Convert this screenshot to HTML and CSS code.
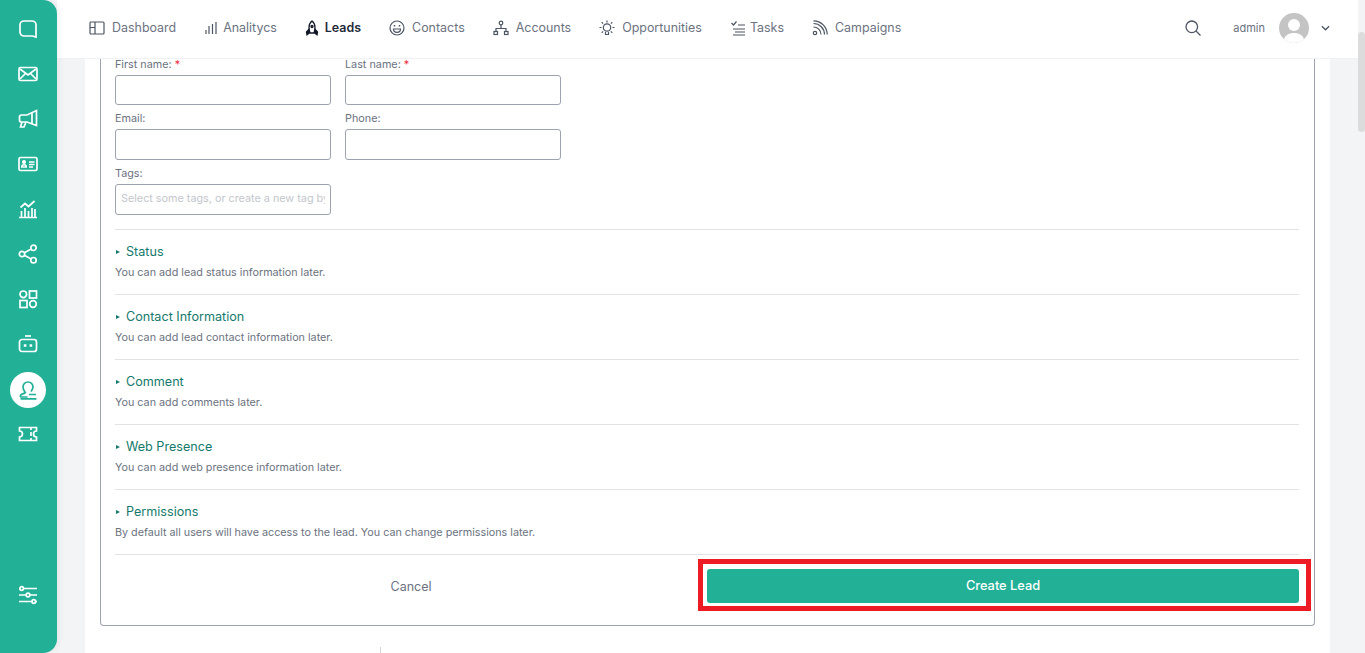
FILE: index.html
```html
<!DOCTYPE html>
<html lang="en">
<head>
    <meta charset="UTF-8">
    <meta name="viewport" content="width=device-width, initial-scale=1.0">
    <title>Create Lead</title>
    <link rel="stylesheet" href="styles.css">
</head>
<body>
<div class="app">
    <aside class="sidebar">
        <svg class="side-icon" viewBox="0 0 20 20"><path d="M6 2h8a4 4 0 0 1 4 4v12l-3.500-1H6a4 4 0 0 1-4-4V6a4 4 0 0 1 4-4z"/></svg>
        <svg class="side-icon" viewBox="0 0 20 20"><rect x="1" y="3.500" width="18" height="13" rx="1.500"/><path d="M2 5l8 6 8-6M2 15l5.500-5.500M18 15l-5.500-5.500"/></svg>
        <svg class="side-icon" viewBox="0 0 20 20"><path d="M18.500 1.500v15L9 13H3.500a2 2 0 0 1-2-2V8a2 2 0 0 1 2-2H9zM14 4v10.500M4 13l-1.500 5H6l2-5"/></svg>
        <svg class="side-icon" viewBox="0 0 20 20"><rect x="1" y="3.500" width="18" height="13" rx="1.500"/><circle cx="6" cy="8" r="1.200" fill="#fff"/><path d="M3.800 13c0-3 4.400-3 4.400 0zM11 8h5.500M11 10.500h5.500M11 13h4"/></svg>
        <svg class="side-icon" viewBox="0 0 20 20"><path d="M1 18.500h18M3.500 18v-6M7 18V9M10.500 18v-6M14 18V9M17 18v-8M2.500 8.500l4.500-4 3.500 3 6-5.500"/></svg>
        <svg class="side-icon" viewBox="0 0 20 20"><circle cx="4" cy="10" r="2.700"/><circle cx="15.500" cy="3.800" r="2.700"/><circle cx="15.500" cy="16.200" r="2.700"/><path d="M6.400 8.700l6.700-3.600M6.400 11.300l6.700 3.600"/></svg>
        <svg class="side-icon" viewBox="0 0 20 20"><circle cx="5.300" cy="5.300" r="3.300"/><rect x="11.500" y="2" width="7" height="7"/><rect x="2" y="11.500" width="7" height="7"/><circle cx="15" cy="15" r="3.300"/></svg>
        <svg class="side-icon" viewBox="0 0 20 20"><rect x="1.500" y="5.500" width="17" height="12" rx="2.500"/><path d="M7 2h6"/><path class="side-dots" d="M5.800 11.500h2.600M11.600 11.500h2.600"/></svg>
        <span class="side-active">
            <svg class="side-icon side-icon-active" viewBox="0 0 20 20"><path d="M7.500 13c0-1-2.500-2.500-2.500-6a5 5 0 0 1 10 0c0 2-1 3-2 4.500M7.500 13c-2 .5-4.500 1-5 2.500-.3 1 .2 1.500 1 1.500h6M11 14.500h7M2.500 18.800h16"/></svg>
        </span>
        <svg class="side-icon" viewBox="0 0 20 20"><path d="M1.500 3.500h17V7a3 3 0 0 0 0 6v3.500h-17V13a3 3 0 0 0 0-6zM13 4v2M13 8v4M13 14v2"/></svg>
        <svg class="side-icon side-settings" viewBox="0 0 20 20"><path d="M5.500 3.500H19M1 3.500h1M1 10h7M12 10h7M1 16.500h13M17.500 16.500H19"/><circle cx="3.700" cy="3.500" r="1.800"/><circle cx="10" cy="10" r="1.800"/><circle cx="15.800" cy="16.500" r="1.800"/></svg>
    </aside>

    <div class="main">
        <header class="topbar">
            <nav class="nav">
                <a class="nav-item"><svg class="nav-icon" viewBox="0 0 16 16"><rect x="1" y="2" width="14" height="12" rx="1"/><path d="M1 7.500h5M6 2v12"/></svg>Dashboard</a>
                <a class="nav-item"><svg class="nav-icon nav-icon-sm" viewBox="0 0 12 16"><path d="M1 14v-4M4 14V6M7.500 14V4M11 14V2"/></svg>Analitycs</a>
                <a class="nav-item active"><svg class="nav-icon nav-icon-md" viewBox="0 0 14 16"><path d="M7 1c2.300 1.700 3 4 3 6.500 0 2-.5 4-1 5.500H5c-.5-1.500-1-3.500-1-5.500C4 5 4.700 2.700 7 1z"/><path class="nav-fin" d="M3.800 9.500L1.500 12l.5 2.800 2.500-2zM10.200 9.500l2.300 2.500-.5 2.800-2.500-2z"/><circle cx="7" cy="6.500" r="1"/></svg>Leads</a>
                <a class="nav-item"><svg class="nav-icon" viewBox="0 0 16 16"><circle cx="8" cy="8" r="7"/><path d="M4.500 9h7c0 4.500-7 4.500-7 0z"/><path class="nav-eyes" d="M5.500 5v1.500M10.500 5v1.500"/></svg>Contacts</a>
                <a class="nav-item"><svg class="nav-icon" viewBox="0 0 16 16"><circle cx="8" cy="3" r="1.800"/><rect x="1" y="11.500" width="3.500" height="3"/><rect x="11.500" y="11.500" width="3.500" height="3"/><path d="M8 5v3.500M3 11V8.500h10V11"/></svg>Accounts</a>
                <a class="nav-item"><svg class="nav-icon" viewBox="0 0 16 16"><circle cx="8" cy="7.500" r="3.700"/><path d="M6.500 12v2.500h3V12M8 .5v2M.5 7.500h2M13.500 7.500h2M2.700 2.200l1.400 1.400M13.300 2.200l-1.400 1.400M2.700 12.800l1.400-1.400M13.300 12.800l-1.400-1.400"/></svg>Opportunities</a>
                <a class="nav-item nav-item-tight"><svg class="nav-icon" viewBox="0 0 16 16"><path d="M1.500 3l2 2 3-3.500M8 5h7M3 9h12M5 12h10M3 15h12"/></svg>Tasks</a>
                <a class="nav-item"><svg class="nav-icon" viewBox="0 0 16 16"><circle cx="3" cy="13" r="1.700"/><path d="M1.500 7a7.500 7.500 0 0 1 7.500 7.500M1.500 3.500a11 11 0 0 1 11 11M1.500.8a13.700 13.700 0 0 1 13.700 13.700"/></svg>Campaigns</a>
            </nav>
            <div class="user">
                <svg class="search" viewBox="0 0 16 16"><circle cx="6.800" cy="6.800" r="5.800"/><path d="M11 11l4.500 4.500"/></svg>
                <span class="username">admin</span>
                <span class="avatar">
                    <svg viewBox="0 0 30 30"><circle cx="15" cy="12" r="6" fill="#fff"/><path d="M4 30c1-8 6-10 11-10s10 2 11 10z" fill="#fff"/></svg>
                </span>
                <svg class="chevron" viewBox="0 0 10 6"><path d="M1 1l4 4 4-4"/></svg>
            </div>
        </header>

        <div class="content">
            <div class="panel">
                <form class="card">
                    <div class="fields">
                        <div class="field">
                            <label>First name: <span class="req">*</span></label>
                            <input class="input input-first" type="text">
                        </div>
                        <div class="field">
                            <label>Last name: <span class="req">*</span></label>
                            <input class="input input-first" type="text">
                        </div>
                        <div class="field">
                            <label>Email:</label>
                            <input class="input" type="text">
                        </div>
                        <div class="field">
                            <label>Phone:</label>
                            <input class="input" type="text">
                        </div>
                        <div class="field">
                            <label>Tags:</label>
                            <input class="input input-tags" type="text" placeholder="Select some tags, or create a new tag by typing">
                        </div>
                    </div>

                    <div class="section">
                        <div class="section-title">Status</div>
                        <div class="section-help">You can add lead status information later.</div>
                    </div>
                    <div class="section">
                        <div class="section-title">Contact Information</div>
                        <div class="section-help">You can add lead contact information later.</div>
                    </div>
                    <div class="section">
                        <div class="section-title">Comment</div>
                        <div class="section-help">You can add comments later.</div>
                    </div>
                    <div class="section">
                        <div class="section-title">Web Presence</div>
                        <div class="section-help">You can add web presence information later.</div>
                    </div>
                    <div class="section">
                        <div class="section-title">Permissions</div>
                        <div class="section-help">By default all users will have access to the lead. You can change permissions later.</div>
                    </div>

                    <div class="actions">
                        <a class="cancel">Cancel</a>
                        <div class="submit-wrap">
                            <button class="submit" type="button">Create Lead</button>
                            <span class="highlight"></span>
                        </div>
                    </div>
                </form>
                <div class="panel-rule"></div>
            </div>
        </div>
    </div>

    <div class="scrollbar"><span class="scrollbar-thumb"></span></div>
</div>
</body>
</html>
```

FILE: styles.css
```css
* {
    box-sizing: border-box;
}
body {
    margin: 0;
    font-family: Inter, "Liberation Sans", sans-serif;
    color: #6b7280;
    background-color: #f3f4f6;
}
.app {
    display: flex;
    height: 100vh;
    overflow: hidden;
}

/* sidebar */
.sidebar {
    position: relative;
    z-index: 2;
    flex: 0 0 57px;
    display: flex;
    flex-direction: column;
    align-items: center;
    gap: 25px;
    padding: 19px 1px 0 0;
    background-color: #22b097;
    border-radius: 0 14px 14px 0;
    box-shadow: 2px 0 6px rgba(0, 0, 0, 0.06);
}
.side-icon {
    flex: none;
    width: 20px;
    height: 20px;
    fill: none;
    stroke: #fff;
    stroke-width: 1.7;
}
.side-dots {
    stroke-width: 2.600;
}
.side-active {
    flex: none;
    display: flex;
    align-items: center;
    justify-content: center;
    width: 36px;
    height: 36px;
    margin: -7px 0 -9px;
    border-radius: 50%;
    background-color: #fff;
}
.side-icon-active {
    stroke: #22b097;
}
.side-settings {
    margin-top: auto;
    margin-bottom: 48px;
}

/* top bar */
.main {
    flex: 1;
    min-width: 0;
    display: flex;
    flex-direction: column;
}
.topbar {
    flex: 0 0 59px;
    display: flex;
    align-items: center;
    justify-content: space-between;
    padding: 0 28px 3px 32px;
    background-color: #fff;
    border-bottom: 1px solid #f0f1f3;
}
.nav {
    display: flex;
    align-items: center;
    gap: 28px;
}
.nav-item {
    display: flex;
    align-items: center;
    gap: 7px;
    font-size: 12.450px;
    color: #6b7280;
}
.nav-item-tight {
    gap: 4px;
}
.nav-item.active {
    font-weight: 600;
    color: #1f2937;
}
.nav-icon {
    width: 16px;
    height: 16px;
    fill: none;
    stroke: #4b5563;
    stroke-width: 1.2;
}
.nav-icon-sm {
    width: 12px;
    margin-left: 1px;
    margin-right: -1px;
}
.nav-icon-md {
    width: 14px;
    margin-right: -1px;
}
.nav-item.active .nav-icon {
    stroke: #111827;
    stroke-width: 1.3;
}
.nav-item.active .nav-fin {
    fill: #111827;
}
.nav-eyes {
    stroke-width: 1.5;
}
.user {
    display: flex;
    align-items: center;
}
.search {
    width: 16px;
    height: 16px;
    margin-right: 32px;
    fill: none;
    stroke: #4b5563;
    stroke-width: 1.3;
}
.username {
    margin-right: 14px;
    font-size: 11px;
}
.avatar {
    width: 30px;
    height: 30px;
    margin-right: 12px;
    border-radius: 50%;
    background-color: #c4c4c4;
    overflow: hidden;
}
.avatar svg {
    display: block;
}
.chevron {
    width: 9px;
    height: 6px;
    fill: none;
    stroke: #4b5563;
    stroke-width: 1.4;
}

/* form */
.content {
    flex: 1;
    padding: 0 28px;
    overflow: hidden;
}
.panel {
    height: 100%;
    padding: 0 15px;
    background-color: #fff;
}
.card {
    padding: 0 15px 0 14px;
    border: 1px solid #9ca3af;
    border-top: 0;
    border-radius: 0 0 4px 4px;
}
.fields {
    display: grid;
    grid-template-columns: 216px 216px;
    column-gap: 14px;
    row-gap: 8px;
    padding-bottom: 14px;
}
.field label {
    display: block;
    height: 11px;
    margin-bottom: 5px;
    font-size: 10.800px;
    line-height: 11px;
    color: #6b7280;
}
.req {
    color: #ef2b3a;
}
.input {
    display: block;
    width: 100%;
    height: 31px;
    padding: 0 5px;
    font-family: inherit;
    font-size: 10.800px;
    color: #374151;
    background-color: #fff;
    border: 1px solid #9ca3af;
    border-radius: 3px;
}
.input-first {
    height: 30px;
}
.input-tags {
    padding-bottom: 2px;
}
.input::placeholder {
    color: #c3c6cc;
    opacity: 1;
}
.section {
    height: 65px;
    padding-top: 14px;
    border-top: 1px solid #e0e2e5;
}
.section-title {
    display: flex;
    align-items: center;
    height: 16px;
    font-size: 12.600px;
    line-height: 16px;
    color: #14796c;
}
.section-title::before {
    content: "";
    width: 0;
    height: 0;
    margin: 0 6px 0 1px;
    border-top: 2.500px solid transparent;
    border-bottom: 2.500px solid transparent;
    border-left: 4px solid #14796c;
}
.section-help {
    margin-top: 6px;
    font-size: 10.780px;
    line-height: 14px;
    color: #6b7280;
}
.actions {
    display: grid;
    grid-template-columns: 1fr 1fr;
    align-items: center;
    padding: 14px 0 22px;
    border-top: 1px solid #e0e2e5;
}
.cancel {
    text-align: center;
    font-size: 12.500px;
    color: #6b7280;
}
.submit-wrap {
    position: relative;
}
.submit {
    display: block;
    width: 100%;
    height: 34px;
    padding-bottom: 2px;
    font-family: inherit;
    font-size: 12.800px;
    font-weight: 500;
    color: #fff;
    background-color: #22b097;
    border: 0;
    border-radius: 3px;
}
/* red annotation box drawn over the button */
.highlight {
    position: absolute;
    top: -10px;
    right: -12px;
    bottom: -8px;
    left: -9px;
    border: 5px solid #ed1c24;
}
.panel-rule {
    width: 1px;
    height: 8px;
    margin: 21px 0 0 280px;
    background-color: #d1d5db;
}

/* page scrollbar */
.scrollbar {
    flex: 0 0 7px;
    padding-top: 32px;
    background-color: #f3f4f6;
}
.scrollbar-thumb {
    display: block;
    height: 100px;
    border-radius: 4px;
    background-color: #dcdcdc;
}
```
